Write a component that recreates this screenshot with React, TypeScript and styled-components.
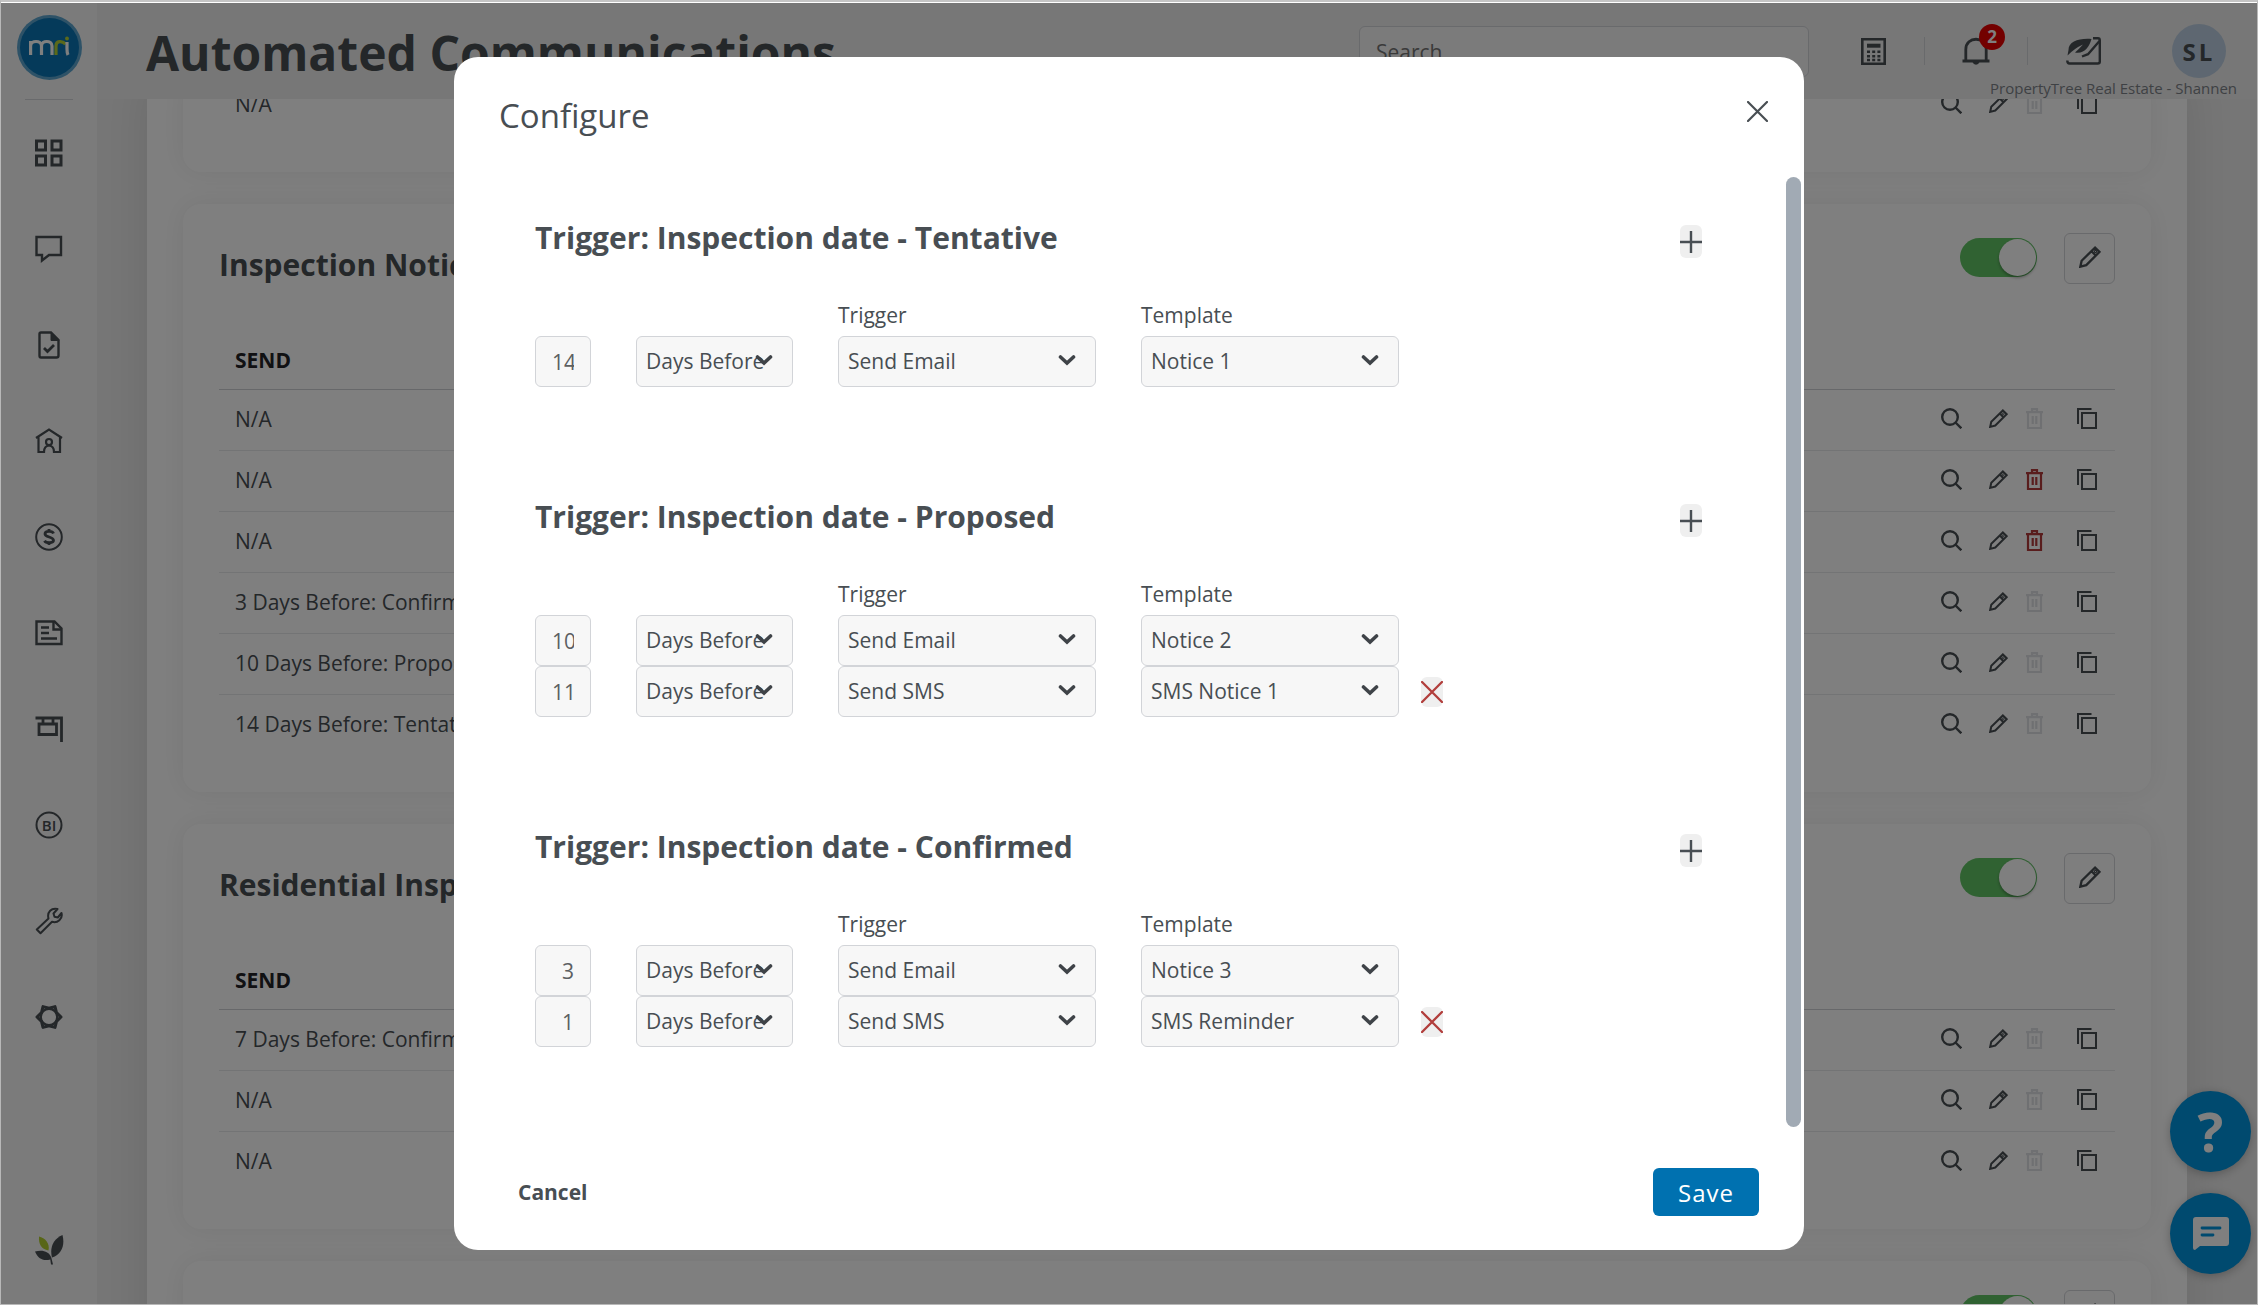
import React from "react";
import styled, { createGlobalStyle } from "styled-components";

const ink = "#484e53";
const line = "#d2d4d8";

const GlobalStyle = createGlobalStyle`
  *, *::before, *::after { box-sizing: border-box; }
  body { margin: 0; background: #fff; }
  body, button, input, select, table {
    font-family: "Open Sans", "Noto Sans", sans-serif;
    font-size: 21px;
    line-height: 29px;
    color: ${ink};
  }
  button { border: 0; padding: 0; background: none; cursor: pointer; }
  h1, h2, h3 { margin: 0; }
  svg { display: block; flex: none; }
`;

const Frame = styled.div`
  height: 100vh;
  border: 1px solid #b8b8b8;
  border-top: 2px solid #c4c4c4;
  padding-top: 1px;
  background: #fff;
`;

const Shell = styled.div`
  position: relative;
  height: 100%;
  display: grid;
  grid-template-columns: 96px minmax(0, 1fr);
  grid-template-rows: minmax(0, 1fr);
  overflow: hidden;
  background: #ededed;
`;

/* ---------- sidebar ---------- */

const Sidebar = styled.nav`
  display: flex;
  flex-direction: column;
  align-items: center;
  padding: 12px 0 39px;
  background: #f7f7f7;
`;

const Logo = styled.a`
  display: block;
  width: 65px;
  height: 65px;
`;

const SideRule = styled.hr`
  width: 48px;
  height: 1px;
  margin: 19px 0 5px;
  border: 0;
  background: ${line};
`;

const SideLink = styled.a`
  display: flex;
  align-items: center;
  justify-content: center;
  width: 96px;
  height: 96px;
  color: ${ink};
`;

const SideFoot = styled.div`
  margin-top: auto;
`;

/* ---------- top bar ---------- */

const Column = styled.div`
  display: grid;
  grid-template-rows: 96px minmax(0, 1fr);
  min-width: 0;
`;

const TopBar = styled.header`
  position: relative;
  z-index: 1;
  display: flex;
  align-items: center;
  padding: 0 31px 0 49px;
  background: #eeeeee;
`;

const PageTitle = styled.h1`
  flex: 1;
  padding-top: 2px;
  font-size: 48px;
  line-height: 65px;
  font-weight: 700;
`;

const SearchBox = styled.input`
  width: 450px;
  height: 51px;
  margin-right: 13px;
  padding: 2px 16px 0;
  border: 1px solid ${line};
  border-radius: 6px;
  background: #f7f7f7;
  &::placeholder { color: #757575; opacity: 1; }
`;

const BarCell = styled.div<{ $last?: boolean }>`
  position: relative;
  display: flex;
  align-items: center;
  justify-content: center;
  width: ${(p) => (p.$last ? 111 : 103)}px;
  height: 28px;
  border-right: 1px solid ${(p) => (p.$last ? "transparent" : line)};
`;

const BarButton = styled.button`
  position: relative;
  display: flex;
`;

const Badge = styled.span`
  position: absolute;
  left: 17px;
  top: -13px;
  width: 26px;
  height: 26px;
  border-radius: 50%;
  background: #e60000;
  color: #fff;
  font-size: 17px;
  line-height: 26px;
  font-weight: 700;
  text-align: center;
`;

const Avatar = styled.button`
  width: 54px;
  height: 54px;
  margin-left: 33px;
  border-radius: 50%;
  background: #bccfe2;
  font-size: 24px;
  font-weight: 700;
  letter-spacing: 3px;
`;

const Account = styled.span`
  position: absolute;
  right: 20px;
  bottom: 0;
  font-size: 15px;
  line-height: 21px;
  color: #7d8288;
`;

/* ---------- content ---------- */

const Scroller = styled.main`
  overflow: hidden;
  padding: 0 70px 0 50px;
`;

const Panel = styled.div`
  display: flex;
  flex-direction: column;
  gap: 32px;
  margin-top: -24px;
  padding: 0 36px;
  background: #fff;
  box-shadow: 0 0 48px rgba(0, 0, 0, 0.1);
`;

const Card = styled.section<{ $continued?: boolean }>`
  padding: ${(p) => (p.$continued ? 0 : 29)}px 36px 36px;
  border-radius: 18px;
  background: #fff;
  box-shadow: 0 0 28px rgba(0, 0, 0, 0.07);
`;

const CardHead = styled.div`
  display: flex;
  align-items: flex-end;
  justify-content: space-between;
  margin-bottom: 48px;
`;

const CardTitle = styled.h2`
  font-size: 30px;
  line-height: 39px;
  font-weight: 700;
`;

const CardTools = styled.div`
  display: flex;
  align-items: center;
  gap: 27px;
`;

const Switch = styled.input`
  appearance: none;
  display: flex;
  justify-content: flex-end;
  width: 77px;
  height: 39px;
  margin: 0 0 2px;
  padding: 1px;
  border-radius: 20px;
  background: #61c465;
  &::before {
    content: "";
    width: 37px;
    height: 37px;
    border-radius: 50%;
    background: #fff;
    box-shadow: 0 2px 3px rgba(0, 0, 0, 0.3);
  }
`;

const EditButton = styled.button`
  display: flex;
  align-items: center;
  justify-content: center;
  width: 51px;
  height: 51px;
  padding-bottom: 3px;
  border: 1px solid ${line};
  border-radius: 6px;
  background: #fcfcfc;
`;

const Table = styled.table`
  width: 100%;
  border-collapse: separate;
  border-spacing: 0;
  th {
    height: 58px;
    padding: 0 16px 1px;
    border-bottom: 1px solid #cfd1d4;
    color: #222327;
    font-weight: 700;
    text-align: left;
  }
  td {
    height: 61px;
    padding: 0 16px 1px;
    border-bottom: 1px solid #e6e8ea;
  }
  td:last-child { width: 206px; padding: 0 18px 3px 0; }
  tr:last-child td { border-bottom-color: transparent; }
`;

const RowTools = styled.div`
  display: grid;
  grid-template-columns: 48px 37px 51px 20px;
  align-items: center;
  justify-content: end;
`;

const IconButton = styled.button<{ $tone?: "danger" | "off" }>`
  display: flex;
  color: ${(p) => (p.$tone === "danger" ? "#b23a3a" : p.$tone === "off" ? "#dfe1e4" : ink)};
`;

const Fabs = styled.div`
  position: absolute;
  right: 6px;
  bottom: 30px;
  display: flex;
  flex-direction: column;
  gap: 21px;
`;

const Fab = styled.button`
  display: flex;
  align-items: center;
  justify-content: center;
  width: 81px;
  height: 81px;
  border-radius: 50%;
  background: #0094de;
  color: #fff;
  font-size: 54px;
  line-height: 81px;
  font-weight: 700;
  box-shadow: 0 2px 10px rgba(0, 0, 0, 0.25);
`;

/* ---------- dialog ---------- */

const Backdrop = styled.div`
  position: absolute;
  inset: 0;
  z-index: 2;
  display: flex;
  align-items: center;
  justify-content: center;
  background: rgba(0, 0, 0, 0.5);
`;

const Dialog = styled.form`
  width: 1350px;
  max-width: 96%;
  border-radius: 24px;
  background: #fff;
`;

const DialogHead = styled.div`
  display: flex;
  align-items: flex-start;
  justify-content: space-between;
  padding: 36px 27px 39px 45px;
`;

const DialogTitle = styled.h2`
  font-size: 33px;
  line-height: 45px;
  font-weight: 400;
`;

const CloseButton = styled.button`
  display: flex;
  align-items: center;
  justify-content: center;
  width: 39px;
  height: 37px;
`;

const DialogBody = styled.div`
  display: flex;
  padding-right: 3px;
`;

const Groups = styled.div`
  flex: 1;
  display: flex;
  flex-direction: column;
  gap: 109px;
  padding: 40px 84px 80px 81px;
`;

const Rail = styled.div`
  width: 15px;
  border-radius: 8px;
  background: #a1aab4;
`;

const GroupHead = styled.div`
  display: flex;
  align-items: flex-end;
  justify-content: space-between;
  margin-bottom: 43px;
`;

const GroupTitle = styled.h3`
  font-size: 30px;
  line-height: 41px;
  font-weight: 700;
`;

const SmallButton = styled.button<{ $danger?: boolean }>`
  display: flex;
  align-items: center;
  justify-content: center;
  width: 22px;
  height: ${(p) => (p.$danger ? 30 : 33)}px;
  border-radius: 6px;
  background: #efefef;
  color: ${(p) => (p.$danger ? "#b23e3c" : ink)};
`;

const Fields = styled.div`
  display: grid;
  grid-template-columns: 56px 157px 258px 258px 22px;
  column-gap: 45px;
  align-items: center;
`;

const FieldLabel = styled.label<{ $col: number }>`
  grid-column: ${(p) => p.$col};
  margin-bottom: 6px;
`;

const DayInput = styled.input`
  appearance: textfield;
  grid-column: 1;
  width: 100%;
  height: 51px;
  padding: 0 16px;
  border: 1px solid ${line};
  border-radius: 6px;
  background: #f7f7f7;
  color: #5c5f62;
  text-align: right;
  &::-webkit-inner-spin-button { display: none; }
`;

const SelectWrap = styled.div`
  position: relative;
  svg {
    position: absolute;
    right: 20px;
    top: 18px;
    pointer-events: none;
  }
`;

const SelectBox = styled.select`
  appearance: none;
  display: block;
  width: 100%;
  height: 51px;
  padding: 0 9px;
  border: 1px solid ${line};
  border-radius: 6px;
  background: #f7f7f7;
`;

const RemoveCell = styled.div`
  margin-left: -23px;
`;

const DialogFoot = styled.div`
  display: flex;
  align-items: center;
  justify-content: space-between;
  padding: 41px 45px 34px 64px;
`;

const CancelButton = styled.button`
  font-weight: 700;
`;

const SaveButton = styled.button`
  width: 106px;
  height: 48px;
  border-radius: 6px;
  background: #0071b0;
  color: #fff;
  font-size: 24px;
  line-height: 33px;
  letter-spacing: 1px;
`;

/* ---------- icons ---------- */

type SvgProps = { w: number; h: number; sw?: number; children: React.ReactNode };
const Svg = ({ w, h, sw = 2, children }: SvgProps) => (
  <svg width={w} height={h} viewBox={`0 0 ${w} ${h}`} fill="none" stroke="currentColor" strokeWidth={sw} aria-hidden="true">
    {children}
  </svg>
);

const SearchIcon = () => (
  <Svg w={21} h={21} sw={2.4}><circle cx="9" cy="9" r="7.8" /><path d="M14.5 14.5 20.3 20.3" /></Svg>
);
const PencilIcon = ({ size = 19 }: { size?: number }) => (
  <svg width={size} height={size} viewBox="0 0 20 20" fill="none" stroke="currentColor" strokeWidth="2.1" aria-hidden="true">
    <path d="M1.2 18.8 2.4 13.4 14.6 1.5 18.6 5.4 6.6 17.4Z M11.4 4.8 15.2 8.6" />
    <circle cx="15" cy="5" r="1" strokeWidth="1" />
  </svg>
);
const TrashIcon = () => (
  <Svg w={17} h={21} sw={2.2}><path d="M0 4.2H17M6 4V1.2H11V4M2 5V20H15V5M6.7 8V16M10.3 8V16" /></Svg>
);
const CopyIcon = () => (
  <Svg w={20} h={21}><path d="M1 16V1H14.5" /><path d="M5 5H19V20H5Z" /></Svg>
);
const Cross = ({ size = 21 }: { size?: number }) => (
  <svg width={size} height={size} viewBox="0 0 21 21" fill="none" stroke="currentColor" strokeWidth="2.2" strokeLinecap="round" aria-hidden="true">
    <path d="M1 1 20 20M20 1 1 20" />
  </svg>
);
const Plus = () => <Svg w={22} h={22} sw={2.4}><path d="M0 11H22M11 0V22" /></Svg>;
const Chevron = () => (
  <svg width="18" height="13" viewBox="0 0 18 13" fill="none" stroke="#3f4348" strokeWidth="3.600" strokeLinecap="round" strokeLinejoin="miter" aria-hidden="true">
    <path d="M2.500 3 9 9 15.500 3" />
  </svg>
);

const LogoMark = () => (
  <svg width="65" height="65" viewBox="0 0 65 65" fill="none" strokeWidth="3.200" aria-hidden="true">
    <circle cx="32.500" cy="32.500" r="32.500" fill="#5ca5cf" />
    <circle cx="32.500" cy="32.500" r="29.500" fill="#0a75b5" />
    <path d="M13.600 40V26M13.600 31C13.600 25 24.500 25 24.500 31V40M24.500 31C24.500 25 35 25 35 31V40" stroke="#fff" />
    <path d="M39 40V31C39 25.500 45 25.500 48.500 29" stroke="#b5d334" />
    <path d="M50 27V34Q50 38 51 40" stroke="#fff" />
    <circle cx="50" cy="23.500" r="1.900" fill="#b5d334" />
  </svg>
);

const sideIcons: { name: string; icon: React.ReactNode }[] = [
  { name: "Dashboard", icon: <Svg w={28} h={28} sw={3}><path d="M1.500 2H10.500V11H1.500ZM17 2H26V11H17ZM1.500 17H10.500V26H1.500ZM17 17H26V26H17Z" /></Svg> },
  { name: "Messages", icon: <Svg w={28} h={28} sw={2.4}><path d="M1.500 2H26V20H14L7 25.500V20H1.500Z" /></Svg> },
  { name: "Tasks", icon: <Svg w={22} h={28} sw={2.4}><path d="M3 1.500H13L20.500 9V24.500Q20.500 26.500 18.500 26.500H3Q1.500 26.500 1.500 24.500V3Q1.500 1.500 3 1.500Z" /><path d="M13 1V9.500H21Z" fill="currentColor" strokeWidth="1" /><path d="M6 17 9.500 20.500 16 14" strokeWidth="2.800" /></Svg> },
  { name: "Properties", icon: <Svg w={28} h={26} sw={2.2}><path d="M1 10 14 1.500 27 10M3.500 9V24H9Q9 18 14 17.500Q19 18 19 24H25V9" /><circle cx="14" cy="14" r="3" /></Svg> },
  { name: "Accounting", icon: <Svg w={28} h={28} sw={2}><circle cx="14" cy="14" r="12.800" /><path d="M18.500 10.500C17.500 7.500 10 7.500 10 11C10 14.500 18.500 13.500 18.500 17.300C18.500 20.500 11 20.500 9.500 17.800M14 6V9M14 19V22" strokeWidth="2.800" /></Svg> },
  { name: "Reports", icon: <Svg w={28} h={26} sw={2.400}><path d="M1.500 1.500H19.500L26.500 8.500V24H1.500Z" /><path d="M18.500 2V9.500H26" /><path d="M6 7.500H14M6 13H14M6 18.500H22" /></Svg> },
  { name: "Listings", icon: <Svg w={28} h={26} sw={2.800}><path d="M0.500 2H26.500V26M4 8H21.500V18.500H4ZM8 3V8M18 3V8" /></Svg> },
  { name: "Business intelligence", icon: <Svg w={28} h={28} sw={2}><circle cx="14" cy="14" r="12.500" /><text x="14" y="19.500" textAnchor="middle" fill="currentColor" stroke="none" fontSize="15" fontWeight="600" fontFamily="Open Sans, sans-serif">BI</text></Svg> },
  { name: "Maintenance", icon: <Svg w={28} h={28} sw={2}><path d="M1.800 22.500 13.500 11.500C11.800 5 16.500 0.500 22.500 2L18.500 6.500 19.500 9.800 22.800 10.500 26.500 6C28 12 22.500 16.500 17 14.800L5.500 26.200Z" strokeLinejoin="round" /></Svg> },
  { name: "Settings", icon: <Svg w={28} h={28} sw={3}><path d="M26 14 21.500 18.300 20 24.400 14 22.700 8 24.400 6.500 18.300 2 14 6.500 9.700 8 3.600 14 5.300 20 3.600 21.500 9.700Z" strokeLinejoin="round" /><circle cx="14" cy="14" r="8.300" strokeWidth="2.400" /></Svg> },
];

const SproutIcon = () => (
  <svg width="29" height="30" viewBox="0 0 29 30" fill={ink} aria-hidden="true">
    <path d="M4 1.500C10 3 15 8 13.500 15.500C6 14 3.500 9 4 1.500Z" fill="#b0cc2f" />
    <path d="M27.500 0C30 10 27 19 17 22.500C14.500 13 18 4 27.500 0Z" />
    <path d="M0 16.500C7 14.500 14 16 16.300 22.500L18 29.500H16L15.300 24.500C8 26.500 3 23.500 0 16.500Z" />
  </svg>
);
const CalculatorIcon = () => (
  <Svg w={25} h={27} sw={2.600}>
    <path d="M1.300 1.300H23.700V25.700H1.300Z" />
    <path d="M6 7.700H19.500" strokeWidth="4" />
    <path d="M6 13.700H20M6 18.200H20M6 22H20" strokeWidth="2.600" strokeDasharray="3 2.200" />
  </Svg>
);
const BellIcon = () => (
  <Svg w={28} h={28} sw={2.800}>
    <path d="M0.500 24H27.500M3.800 24V12.500C3.800 -1.200 24.200 -1.200 24.200 12.500V24" />
    <path d="M10.500 25H17.500Q16.500 27.800 14 27.800Q11.500 27.800 10.500 25Z" fill="currentColor" stroke="none" />
  </Svg>
);
const LeafCardIcon = () => (
  <Svg w={35} h={28} sw={2.400}>
    <path d="M27 1.300H32Q33.800 1.300 33.800 3.500V24.500Q33.800 26.500 31.800 26.500H3.500Q1.300 26.500 1.300 23.500" />
    <path d="M33.500 4 22 17.200 16 19.500" />
    <path d="M2.500 13C2.500 4.500 13 1 25.500 2C23 10 19 17 9 15.500Q13 12 17 7.500Q9 11 1.500 18.500Z" fill="currentColor" stroke="none" />
  </Svg>
);
const ChatIcon = () => (
  <svg width="36" height="33" viewBox="0 0 36 33" aria-hidden="true">
    <path d="M3 0H33Q36 0 36 3V26Q36 29 33 29H7L2 33Q0 33 0 31V3Q0 0 3 0Z" fill="#fff" />
    <path d="M9 11H27M9 18H20" stroke="#0094de" strokeWidth="2.800" strokeLinecap="round" />
  </svg>
);

/* ---------- data ---------- */

type Row = { send: string; removable?: boolean };
type CardData = { id: string; title?: string; rows: Row[] };
const cards: CardData[] = [
  { id: "previous", rows: [{ send: "N/A" }] },
  {
    id: "notices",
    title: "Inspection Notices",
    rows: [
      { send: "N/A" },
      { send: "N/A", removable: true },
      { send: "N/A", removable: true },
      { send: "3 Days Before: Confirmed" },
      { send: "10 Days Before: Proposed" },
      { send: "14 Days Before: Tentative" },
    ],
  },
  { id: "residential", title: "Residential Inspections", rows: [{ send: "7 Days Before: Confirmed" }, { send: "N/A" }, { send: "N/A" }] },
  { id: "next", title: "", rows: [] },
];

type Rule = { days: number; action: string; template: string };
const groups: { stage: string; rules: Rule[] }[] = [
  { stage: "Tentative", rules: [{ days: 14, action: "Send Email", template: "Notice 1" }] },
  {
    stage: "Proposed",
    rules: [
      { days: 10, action: "Send Email", template: "Notice 2" },
      { days: 11, action: "Send SMS", template: "SMS Notice 1" },
    ],
  },
  {
    stage: "Confirmed",
    rules: [
      { days: 3, action: "Send Email", template: "Notice 3" },
      { days: 1, action: "Send SMS", template: "SMS Reminder" },
    ],
  },
];

const Select = ({ id, value, label }: { id?: string; value: string; label: string }) => (
  <SelectWrap>
    <SelectBox id={id} aria-label={label} defaultValue={value}>
      <option>{value}</option>
    </SelectBox>
    <Chevron />
  </SelectWrap>
);

const TriggerGroup = ({ stage, rules }: { stage: string; rules: Rule[] }) => (
  <section>
    <GroupHead>
      <GroupTitle>Trigger: Inspection date - {stage}</GroupTitle>
      <SmallButton type="button" aria-label={`Add ${stage} trigger`}><Plus /></SmallButton>
    </GroupHead>
    <Fields>
      <FieldLabel $col={3} htmlFor={`${stage}-action-0`}>Trigger</FieldLabel>
      <FieldLabel $col={4} htmlFor={`${stage}-template-0`}>Template</FieldLabel>
      {rules.map((r, i) => (
        <React.Fragment key={i}>
          <DayInput type="number" aria-label="Number of days" defaultValue={r.days} />
          <Select label="When" value="Days Before" />
          <Select id={`${stage}-action-${i}`} label="Trigger" value={r.action} />
          <Select id={`${stage}-template-${i}`} label="Template" value={r.template} />
          {i > 0 && (
            <RemoveCell>
              <SmallButton type="button" $danger aria-label="Remove trigger"><Cross size={22} /></SmallButton>
            </RemoveCell>
          )}
        </React.Fragment>
      ))}
    </Fields>
  </section>
);

const CommunicationCard = ({ title, rows }: Omit<CardData, "id">) => {
  const continued = title === undefined;
  return (
    <Card $continued={continued}>
      {!continued && (
        <CardHead>
          <CardTitle>{title}</CardTitle>
          <CardTools>
            <Switch type="checkbox" role="switch" defaultChecked aria-label={`${title} enabled`} />
            <EditButton aria-label={`Configure ${title}`}><PencilIcon size={22} /></EditButton>
          </CardTools>
        </CardHead>
      )}
      {rows.length > 0 && (
        <Table>
          {!continued && <thead><tr><th scope="col">SEND</th><th aria-label="Actions" /></tr></thead>}
          <tbody>
            {rows.map((r, i) => (
              <tr key={i}>
                <td>{r.send}</td>
                <td>
                  <RowTools>
                    <IconButton aria-label="View"><SearchIcon /></IconButton>
                    <IconButton aria-label="Edit"><PencilIcon /></IconButton>
                    <IconButton aria-label="Delete" disabled={!r.removable} $tone={r.removable ? "danger" : "off"}><TrashIcon /></IconButton>
                    <IconButton aria-label="Copy"><CopyIcon /></IconButton>
                  </RowTools>
                </td>
              </tr>
            ))}
          </tbody>
        </Table>
      )}
    </Card>
  );
};

export default function App() {
  return (
    <Frame>
      <GlobalStyle />
      <Shell>
        <Sidebar aria-label="Main">
          <Logo href="#home" aria-label="MRI home"><LogoMark /></Logo>
          <SideRule />
          {sideIcons.map((s) => (
            <SideLink key={s.name} href="#" aria-label={s.name}>{s.icon}</SideLink>
          ))}
          <SideFoot><SproutIcon /></SideFoot>
        </Sidebar>

        <Column>
          <TopBar>
            <PageTitle>Automated Communications</PageTitle>
            <SearchBox type="search" placeholder="Search" aria-label="Search" />
            <BarCell><BarButton aria-label="Calculator"><CalculatorIcon /></BarButton></BarCell>
            <BarCell>
              <BarButton aria-label="Notifications"><BellIcon /><Badge>2</Badge></BarButton>
            </BarCell>
            <BarCell $last><BarButton aria-label="PropertyTree"><LeafCardIcon /></BarButton></BarCell>
            <Avatar>SL</Avatar>
            <Account>PropertyTree Real Estate - Shannen</Account>
          </TopBar>
          <Scroller>
            <Panel>
              {cards.map((c) => <CommunicationCard key={c.id} title={c.title} rows={c.rows} />)}
            </Panel>
          </Scroller>
        </Column>

        <Fabs>
          <Fab aria-label="Help">?</Fab>
          <Fab aria-label="Chat"><ChatIcon /></Fab>
        </Fabs>

        <Backdrop>
          <Dialog role="dialog" aria-modal="true" aria-labelledby="dialog-title" onSubmit={(e) => e.preventDefault()}>
            <DialogHead>
              <DialogTitle id="dialog-title">Configure</DialogTitle>
              <CloseButton type="button" aria-label="Close"><Cross /></CloseButton>
            </DialogHead>
            <DialogBody>
              <Groups>
                {groups.map((g) => <TriggerGroup key={g.stage} {...g} />)}
              </Groups>
              <Rail />
            </DialogBody>
            <DialogFoot>
              <CancelButton type="button">Cancel</CancelButton>
              <SaveButton type="submit">Save</SaveButton>
            </DialogFoot>
          </Dialog>
        </Backdrop>
      </Shell>
    </Frame>
  );
}
